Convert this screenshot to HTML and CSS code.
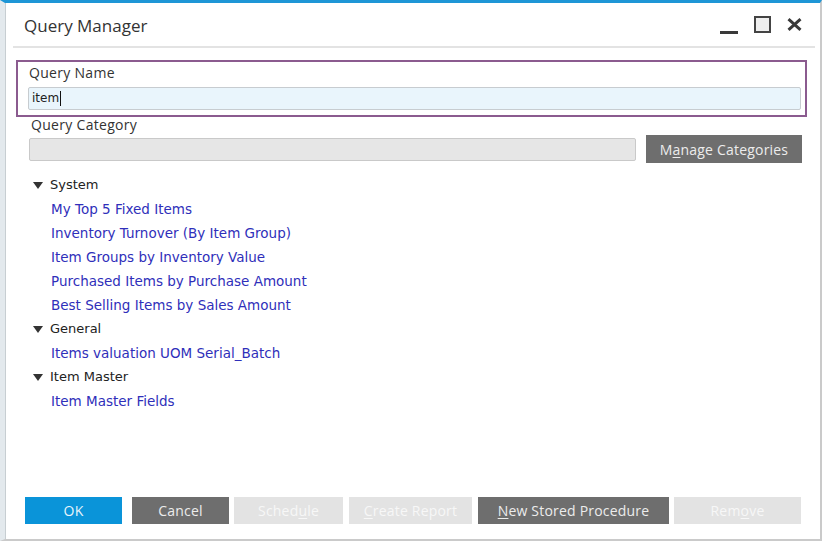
FILE: index.html
```html
<!DOCTYPE html>
<html>
<head>
<meta charset="utf-8">
<link rel="stylesheet" href="styles.css">
</head>
<body>
<div class="window">
  <div class="titlebar">
    <span class="title">Query Manager</span>
    <div class="controls">
      <span class="ctl-min"></span>
      <span class="ctl-max"></span>
      <svg class="ctl-close" width="15" height="13" viewBox="0 0 15 13"><path d="M1.5 1.2 L13.5 11.8 M13.5 1.2 L1.5 11.8" stroke="#3a3a3a" stroke-width="3"/></svg>
    </div>
  </div>
  <div class="sep"></div>
  <div class="group">
    <div class="label">Query Name</div>
    <div class="input name-input"><span>item</span><span class="caret"></span></div>
  </div>
  <div class="label cat-label">Query Category</div>
  <div class="cat-row">
    <div class="input cat-input"></div>
    <button class="btn dark manage">M<u>a</u>nage Categories</button>
  </div>
  <ul class="tree">
    <li class="node"><span class="tri"></span>System</li>
    <li class="leaf">My Top 5 Fixed Items</li>
    <li class="leaf">Inventory Turnover (By Item Group)</li>
    <li class="leaf">Item Groups by Inventory Value</li>
    <li class="leaf">Purchased Items by Purchase Amount</li>
    <li class="leaf">Best Selling Items by Sales Amount</li>
    <li class="node"><span class="tri"></span>General</li>
    <li class="leaf">Items valuation UOM Serial_Batch</li>
    <li class="node"><span class="tri"></span>Item Master</li>
    <li class="leaf">Item Master Fields</li>
  </ul>
  <div class="spacer"></div>
  <div class="buttons">
    <button class="btn blue b-ok">OK</button>
    <button class="btn dark b-cancel">Cancel</button>
    <button class="btn off b-sched">Sched<u>u</u>le</button>
    <button class="btn off b-report"><u>C</u>reate Report</button>
    <button class="btn dark b-new"><u>N</u>ew Stored Procedure</button>
    <button class="btn off b-remove">Rem<u>o</u>ve</button>
  </div>
</div>
</body>
</html>
```
FILE: styles.css
```css
html, body {
  margin: 0;
  padding: 0;
  background: #ffffff;
}
.window {
  width: 822px;
  height: 541px;
  box-sizing: border-box;
  border-top: 3px solid #1e96d6;
  border-left: 5px solid #e3e9ed;
  border-right: 2px solid #cacaca;
  border-bottom: 2px solid #cacaca;
  box-shadow: inset 1px 0 0 #c7ced2;
  background: #ffffff;
  display: flex;
  flex-direction: column;
  font-family: "Open Sans", "Noto Sans", sans-serif;
  color: #333;
}
.titlebar {
  height: 43px;
  display: flex;
  align-items: center;
  padding-left: 19px;
}
.title {
  font-size: 17px;
  color: #333;
  margin-top: 2px;
}
.controls {
  margin-left: auto;
  display: flex;
  align-items: center;
  margin-right: 18px;
  height: 43px;
}
.ctl-min {
  width: 18px;
  height: 3px;
  background: #3a3a3a;
  margin-top: 16px;
}
.ctl-max {
  width: 13px;
  height: 13px;
  border: 2px solid #444;
  background: #efefef;
  margin-left: 16px;
}
.ctl-close {
  margin-left: 16px;
}
.sep {
  height: 2px;
  background: #e3e3e3;
  margin: 0 5px 0 8px;
}
.group {
  margin: 12px 0 0 11px;
  width: 791px;
  height: 57px;
  box-sizing: border-box;
  border: 2px solid #8b5b8f;
  padding: 2px 4px 0 10px;
}
.label {
  font-size: 14px;
  letter-spacing: 0.3px;
  color: #333;
  line-height: 18px;
  padding-left: 1px;
}
.input {
  box-sizing: border-box;
  height: 23px;
  border: 1px solid #c7ccd0;
  border-radius: 2px;
}
.name-input {
  margin-top: 5px;
  background: #e9f5fc;
  font-family: "DejaVu Sans", sans-serif;
  font-size: 12px;
  color: #222;
  line-height: 21px;
  padding-left: 3px;
  display: flex;
  align-items: center;
}
.caret {
  display: inline-block;
  width: 1px;
  height: 15px;
  background: #111;
  margin-left: 1px;
}
.cat-label {
  margin: -1px 0 0 25px;
}
.cat-row {
  display: flex;
  align-items: center;
  margin: 0 0 0 24px;
  height: 30px;
}
.cat-input {
  width: 607px;
  background: #e6e6e6;
  border-color: #c9c9c9;
}
.btn {
  border: none;
  font-family: "Open Sans", "Noto Sans", sans-serif;
  font-size: 14px;
  letter-spacing: 0.2px;
  height: 27px;
  padding: 0;
  cursor: default;
}
.btn u {
  text-underline-offset: 2px;
}
.dark {
  background: #6e6e6e;
  color: #ececec;
}
.blue {
  background: #0a94d9;
  color: #e8f4fb;
}
.off {
  background: #e3e3e3;
  color: #f7f7f7;
}
.manage {
  width: 156px;
  height: 28px;
  margin-left: 10px;
}
.tree {
  list-style: none;
  margin: 9px 0 0 0;
  padding: 0 0 0 25px;
  font-family: "DejaVu Sans", sans-serif;
  font-size: 13px;
}
.tree li {
  height: 24px;
  line-height: 24px;
}
.node {
  color: #222;
  display: flex;
  align-items: center;
}
.tri {
  width: 0;
  height: 0;
  border-left: 5.5px solid transparent;
  border-right: 5.5px solid transparent;
  border-top: 7px solid #333;
  margin: 0 7px 0 3px;
}
.leaf {
  color: #2f2fba;
  padding-left: 21px;
  font-size: 13.5px;
}
.spacer {
  flex: 1;
}
.buttons {
  display: flex;
  margin: 0 0 15px 20px;
}
.b-ok { width: 97px; }
.b-cancel { width: 97px; margin-left: 10px; }
.b-sched { width: 109px; margin-left: 5px; }
.b-report { width: 123px; margin-left: 6px; }
.b-new { width: 191px; margin-left: 6px; }
.b-remove { width: 127px; margin-left: 5px; }
```
